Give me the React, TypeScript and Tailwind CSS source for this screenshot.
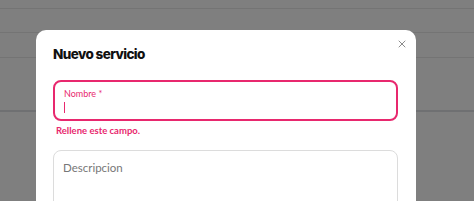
import { X } from 'lucide-react'

export default function App() {
  return (
    <div className="relative h-[201px] w-full overflow-hidden bg-[#7f7f7f] font-['Lato',sans-serif]">
      {/* background page rows */}
      <div className="flex flex-col">
        <div className="h-[9px] border-b border-[#747474]" />
        <div className="h-[24px] border-b border-[#747474]" />
        <div className="h-[25px] border-b border-[#747474]" />
        <div className="h-[54px] border-b-2 border-[#6f7072]" />
      </div>

      {/* modal */}
      <div className="absolute left-[36px] top-[30px] w-[380px] h-[200px] rounded-[10px] bg-white px-[17px] pt-[14px]">
        <button type="button" className="absolute right-[8px] top-[8px] text-[#666]">
          <X size={12} strokeWidth={1.5} />
        </button>
        <h2 className="m-0 font-['Inter',sans-serif] text-[13.5px] font-extrabold leading-[20px] text-[#111] tracking-[-0.6px]">Nuevo servicio</h2>

        <div className="mt-[16px] flex h-[41px] w-[345px] flex-col rounded-[8px] border-2 border-[#e8286e] px-[9px] pt-[6px]">
          <span className="text-[9px] leading-[12px] text-[#e8286e]">Nombre *</span>
          <span className="mt-[2px] h-[11px] w-px bg-[#e8286e]" />
        </div>
        <p className="m-0 mt-[4px] pl-[3px] text-[9.5px] leading-[12px] font-bold text-[#e8286e]">Rellene este campo.</p>

        <div className="mt-[13px] h-[80px] w-[345px] rounded-[8px] border border-[#dcdcdc] px-[9px] pt-[3px]">
          <span className="text-[11.5px] leading-[16px] text-[#777]">Descripcion</span>
        </div>
      </div>
    </div>
  )
}
